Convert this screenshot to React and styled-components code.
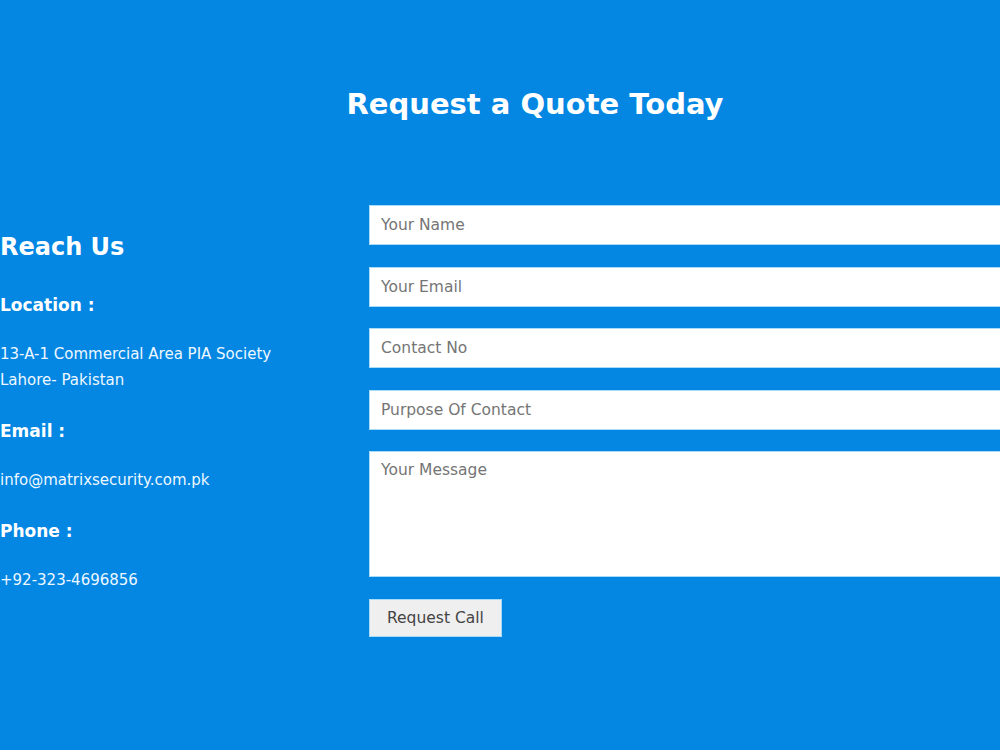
import React from 'react';
import styled, { createGlobalStyle } from 'styled-components';

const GlobalStyle = createGlobalStyle`
    html, body {
        margin: 0;
        padding: 0;
        background: #0387e3;
        overflow: hidden;
    }
    * {
        box-sizing: border-box;
    }
`;

const FONT = `"DejaVu Sans", "Noto Sans", sans-serif`;

const Section = styled.section`
    width: 1070px;
    height: 750px;
    background: #0387e3;
    color: #ffffff;
    font-family: ${FONT};
    padding-top: 84px;
`;

const Title = styled.h2`
    margin: 0;
    text-align: center;
    font-size: 29px;
    font-weight: 600;
    line-height: 40px;
`;

const Row = styled.div`
    display: flex;
    margin-top: 81px;
`;

const Info = styled.div`
    width: 369px;
    padding-top: 26px;
`;

const InfoHeading = styled.h3`
    margin: 0 0 30px;
    font-size: 24px;
    font-weight: 600;
    line-height: 32px;
`;

const Label = styled.h4`
    margin: 0 0 ${({ gap }) => gap || 24}px;
    font-size: 17px;
    font-weight: 600;
    line-height: 24px;
`;

const Text = styled.p`
    margin: 0 0 26px;
    font-size: 15px;
    font-weight: 400;
    line-height: 26px;
    color: #eef7ff;
`;

const Form = styled.form`
    width: 690px;
    display: flex;
    flex-direction: column;
    align-items: flex-start;
`;

const Field = styled.input`
    width: 100%;
    height: 40px;
    margin-bottom: 21.5px;
    padding: 0 11px;
    border: 1px solid #a8dbf7;
    background: #ffffff;
    font-family: ${FONT};
    font-size: 15.5px;
    color: #333;
    outline: none;
    ::placeholder {
        color: #7a7a7a;
    }
`;

const Message = styled.textarea`
    width: 100%;
    height: 126px;
    margin-bottom: 22px;
    padding: 7px 11px;
    border: 1px solid #a8dbf7;
    background: #ffffff;
    font-family: ${FONT};
    font-size: 15.5px;
    line-height: 22px;
    resize: none;
    outline: none;
    ::placeholder {
        color: #7a7a7a;
    }
`;

const Button = styled.button`
    height: 38px;
    padding: 0 17px;
    border: 1px solid #a8dbf7;
    background: #efefef;
    color: #444;
    font-family: ${FONT};
    font-size: 15.5px;
    cursor: pointer;
`;

const App = () => (
    <>
        <GlobalStyle />
        <Section>
            <Title>Request a Quote Today</Title>
            <Row>
                <Info>
                    <InfoHeading>Reach Us</InfoHeading>
                    <Label>Location :</Label>
                    <Text>
                        13-A-1 Commercial Area PIA Society
                        <br />
                        Lahore- Pakistan
                    </Text>
                    <Label>Email :</Label>
                    <Text>info@matrixsecurity.com.pk</Text>
                    <Label>Phone :</Label>
                    <Text>+92-323-4696856</Text>
                </Info>
                <Form onSubmit={(e) => e.preventDefault()}>
                    <Field type="text" placeholder="Your Name" />
                    <Field type="email" placeholder="Your Email" />
                    <Field type="text" placeholder="Contact No" />
                    <Field type="text" placeholder="Purpose Of Contact" />
                    <Message placeholder="Your Message" />
                    <Button type="submit">Request Call</Button>
                </Form>
            </Row>
        </Section>
    </>
);

export default App;
